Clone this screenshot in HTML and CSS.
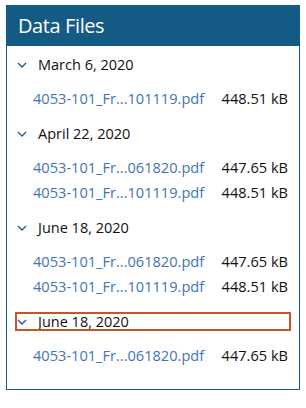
FILE: index.html
```html
<!DOCTYPE html>
<html lang="en">
<head>
  <meta charset="UTF-8" />
  <title>Data Files</title>
  <link rel="stylesheet" href="styles.css">
</head>
<body>
  <div class="panel">
    <h2 class="panel-title">Data Files</h2>

    <div class="panel-body">
      <div class="group">
        <div class="date"><span class="chev"><svg width="10" height="6" viewBox="0 0 10 6"><path d="M1 1l4 4 4-4" /></svg></span>March 6, 2020</div>
        <div class="files">
          <div class="file"><a href="#">4053-101_Fr...101119.pdf</a><span class="size">448.51 kB</span></div>
        </div>
      </div>

      <div class="group">
        <div class="date"><span class="chev"><svg width="10" height="6" viewBox="0 0 10 6"><path d="M1 1l4 4 4-4" /></svg></span>April 22, 2020</div>
        <div class="files">
          <div class="file"><a href="#">4053-101_Fr...061820.pdf</a><span class="size">447.65 kB</span></div>
          <div class="file"><a href="#">4053-101_Fr...101119.pdf</a><span class="size">448.51 kB</span></div>
        </div>
      </div>

      <div class="group">
        <div class="date"><span class="chev"><svg width="10" height="6" viewBox="0 0 10 6"><path d="M1 1l4 4 4-4" /></svg></span>June 18, 2020</div>
        <div class="files">
          <div class="file"><a href="#">4053-101_Fr...061820.pdf</a><span class="size">447.65 kB</span></div>
          <div class="file"><a href="#">4053-101_Fr...101119.pdf</a><span class="size">448.51 kB</span></div>
        </div>
      </div>

      <div class="group">
        <div class="date focused"><span class="chev"><svg width="10" height="6" viewBox="0 0 10 6"><path d="M1 1l4 4 4-4" /></svg></span>June 18, 2020</div>
        <div class="files">
          <div class="file"><a href="#">4053-101_Fr...061820.pdf</a><span class="size">447.65 kB</span></div>
        </div>
      </div>
    </div>
  </div>
</body>
</html>
```

FILE: styles.css
```css
html, body {
  margin: 0;
  padding: 0;
}
body {
  padding: 5px 6px;
  font-family: "Open Sans", "Noto Sans", sans-serif;
  background: #fff;
}

.panel {
  border: 1px solid #135b85;
  height: 383px;
}

.panel-title {
  margin: 0;
  height: 40px;
  padding-left: 11px;
  background-color: #135b85;
  color: #fff;
  font-size: 20px;
  font-weight: 500;
  letter-spacing: -0.4px;
  line-height: 39px;
}

.panel-body {
  padding: 6px 8px 0;
}

.date {
  display: flex;
  align-items: center;
  height: 19px;
  margin: 3px 0 2px;
  font-size: 14.5px;
  color: #111;
}

.date.focused {
  outline: 2px solid #c8532a;
  outline-offset: -2px;
}

.chev {
  width: 21px;
  padding-left: 2px;
  display: flex;
}
.chev path {
  fill: none;
  stroke: #1f5a86;
  stroke-width: 1.3;
}

.files {
  padding: 10px 0;
}

.file {
  display: flex;
  justify-content: space-between;
  height: 25px;
  line-height: 25px;
  padding: 0 3px 0 18px;
  font-size: 14.6px;
}

.file a {
  color: #3f74b5;
  text-decoration: none;
}

.size {
  color: #111;
}
```
